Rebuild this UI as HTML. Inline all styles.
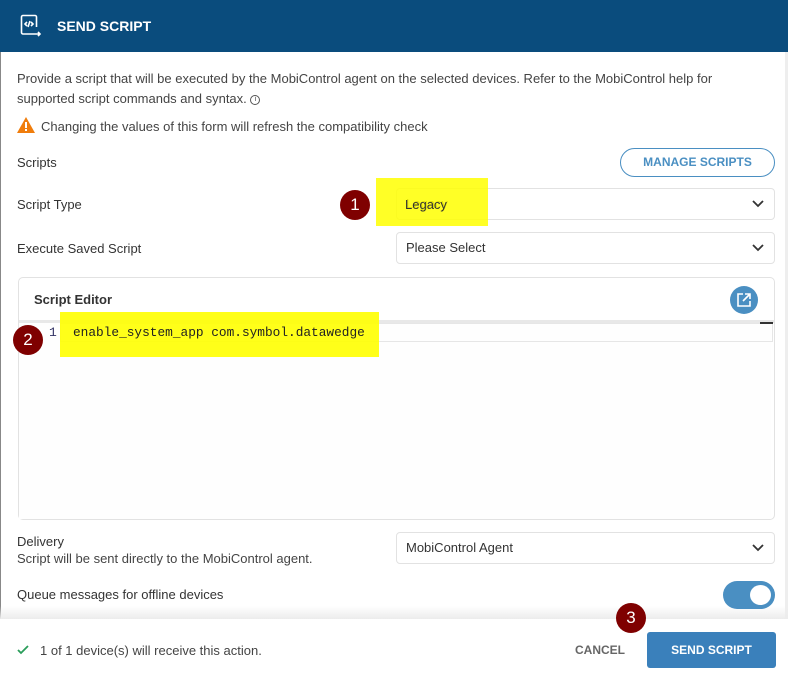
<!DOCTYPE html>
<html><head><style>
*{box-sizing:border-box;margin:0;padding:0}
body{width:788px;height:675px;overflow:hidden;background:#fff;font-family:"Liberation Sans",sans-serif;font-size:13px;color:#333;position:relative}
.abs{position:absolute}
.hdr{left:0;top:0;width:788px;height:52px;background:#0a4c7d}
.hdr .t{left:57px;top:18px;color:#fff;font-weight:bold;font-size:14px}
.sel{position:absolute;left:396px;width:379px;height:32px;border:1px solid #e2e2e2;border-radius:4px;padding:0 9px;line-height:30px;font-size:13px;color:#333}
.sel svg{position:absolute;right:10px;top:11px}
.lbl{position:absolute;left:17px;font-size:13px;color:#333}
.yl{background:#ffff00;position:absolute}
.badge{position:absolute;width:30px;height:30px;border-radius:50%;background:#7f0000;color:#fff;font-size:17px;text-align:center;line-height:30px;z-index:5}
</style></head><body>
<div class="abs" style="left:0;top:0;width:1px;height:675px;background:#888"></div>
<div class="abs" style="left:785px;top:52px;width:3px;height:570px;background:#eee"></div>
<div class="abs hdr">
<svg class="abs" style="left:20px;top:14px" width="22" height="24" viewBox="0 0 22 24" fill="none" stroke="#fff" stroke-width="1.6"><path d="M14 20H3a1.5 1.5 0 0 1-1.5-1.5V3A1.5 1.5 0 0 1 3 1.5h12A1.5 1.5 0 0 1 16.5 3v10"/><path d="M7 8l-2 2 2 2M11 8l2 2-2 2M10 7l-2 6"/><path d="M14 20h6M18 18l2 2-2 2"/></svg>
<div class="abs t">SEND SCRIPT</div>
</div>
<div class="abs" style="left:17px;top:69px;width:740px;line-height:20px;color:#444">Provide a script that will be executed by the MobiControl agent on the selected devices. Refer to the MobiControl help for supported script commands and syntax. <span style="display:inline-block;width:10px;height:10px;border:1px solid #555;border-radius:50%;font-size:7px;line-height:8px;text-align:center;vertical-align:middle">i</span></div>
<svg class="abs" style="left:17px;top:117px" width="18" height="16" viewBox="0 0 18 16"><path d="M9 0L18 16H0Z" fill="#f07d0c"/><rect x="8" y="5" width="2" height="6" fill="#fff"/><rect x="8" y="12" width="2" height="2" fill="#fff"/></svg>
<div class="abs" style="left:41px;top:119px;color:#444">Changing the values of this form will refresh the compatibility check</div>
<div class="lbl" style="top:155px">Scripts</div>
<div class="abs" style="left:620px;top:148px;width:155px;height:29px;border:1px solid #4a8fc2;border-radius:15px;color:#4a8fc2;font-weight:bold;font-size:12px;text-align:center;line-height:27px">MANAGE SCRIPTS</div>
<div class="lbl" style="top:197px">Script Type</div>
<div class="sel" style="top:188px">Legacy<svg width="12" height="8" viewBox="0 0 12 8"><path d="M1 1l5 5 5-5" stroke="#333" stroke-width="1.8" fill="none"/></svg></div>
<div class="yl" style="left:376px;top:178px;width:112px;height:48px;opacity:.85"></div>
<div class="abs" style="left:405px;top:197px;color:#333">Legacy</div>
<div class="badge" style="left:340px;top:190px">1</div>
<div class="lbl" style="top:241px">Execute Saved Script</div>
<div class="sel" style="top:232px">Please Select<svg width="12" height="8" viewBox="0 0 12 8"><path d="M1 1l5 5 5-5" stroke="#333" stroke-width="1.8" fill="none"/></svg></div>
<div class="abs" style="left:18px;top:277px;width:757px;height:243px;border:1px solid #e2e2e2;border-radius:5px"></div>
<div class="abs" style="left:34px;top:292px;font-weight:bold;font-size:13px">Script Editor</div>
<div class="abs" style="left:730px;top:286px;width:28px;height:28px;border-radius:50%;background:#4a8fc2"></div>
<svg class="abs" style="left:736px;top:292px" width="16" height="16" viewBox="0 0 16 16" fill="none" stroke="#fff" stroke-width="1.6"><path d="M7 2H2v12h12V9M9 2h5v5M14 2L7 9"/></svg>
<div class="abs" style="left:19px;top:320px;width:755px;height:3px;background:#e8e8e8"></div>
<div class="abs" style="left:19px;top:323px;width:752px;height:196px;background:#fefefe"></div>
<div class="abs" style="left:60px;top:323px;width:713px;height:19px;border:1px solid #e6e6e6"></div>
<div class="abs" style="left:760px;top:322px;width:13px;height:2px;background:#333"></div>
<div class="yl" style="left:60px;top:312px;width:319px;height:45px;opacity:.9"></div>
<div class="abs" style="left:49px;top:325px;font-family:'Liberation Mono',monospace;font-size:13px;color:#336">1</div>
<div class="abs" style="left:73px;top:325px;font-family:'Liberation Mono',monospace;font-size:12.8px;color:#222">enable_system_app com.symbol.datawedge</div>
<div class="badge" style="left:13px;top:325px">2</div>
<div class="abs" style="left:17px;top:534px">Delivery</div>
<div class="abs" style="left:17px;top:551px;color:#444">Script will be sent directly to the MobiControl agent.</div>
<div class="sel" style="top:532px">MobiControl Agent<svg width="12" height="8" viewBox="0 0 12 8"><path d="M1 1l5 5 5-5" stroke="#333" stroke-width="1.8" fill="none"/></svg></div>
<div class="lbl" style="top:587px">Queue messages for offline devices</div>
<div class="abs" style="left:0;top:606px;width:788px;height:13px;background:linear-gradient(rgba(255,255,255,0),#ececec)"></div>
<div class="abs" style="left:723px;top:581px;width:52px;height:28px;border-radius:14px;background:#4a8fc2"></div>
<div class="abs" style="left:750px;top:585px;width:21px;height:20px;border-radius:50%;background:#fff"></div>
<div class="abs" style="left:0;top:619px;width:788px;height:56px;background:#fff"></div>
<svg class="abs" style="left:17px;top:645px" width="12" height="10" viewBox="0 0 12 10"><path d="M1 5l3 3 7-7" stroke="#2a9d5a" stroke-width="1.8" fill="none"/></svg>
<div class="abs" style="left:40px;top:643px;color:#444">1 of 1 device(s) will receive this action.</div>
<div class="abs" style="left:575px;top:643px;color:#666;font-weight:bold;font-size:12px">CANCEL</div>
<div class="abs" style="left:647px;top:632px;width:129px;height:36px;background:#3a80bb;border-radius:3px;color:#fff;font-weight:bold;font-size:12px;text-align:center;line-height:36px">SEND SCRIPT</div>
<div class="badge" style="left:616px;top:603px">3</div>
</body></html>
